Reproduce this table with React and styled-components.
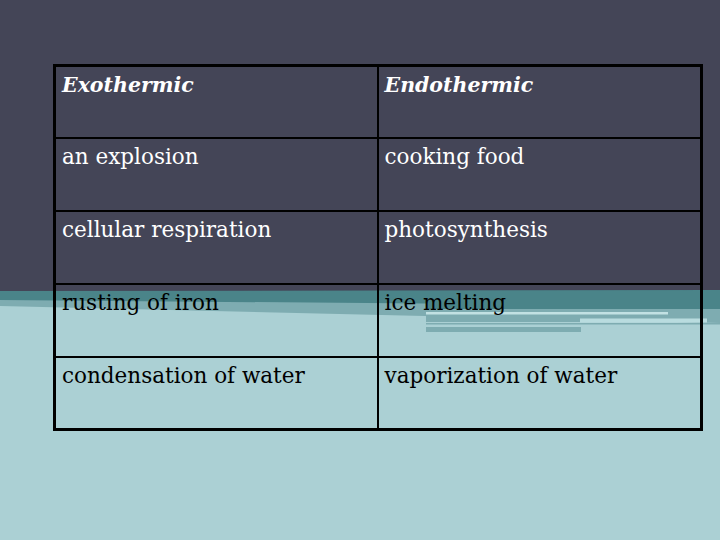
import styled, { createGlobalStyle } from "styled-components";

const GlobalStyle = createGlobalStyle`
    html, body {
        margin: 0;
        padding: 0;
        background: #abd0d4;
    }
`;

const Slide = styled.div`
    position: relative;
    width: 720px;
    height: 540px;
    overflow: hidden;
    background: linear-gradient(to bottom, #444557 0, #444557 291px, #abd0d4 291px);
    box-sizing: border-box;
    padding: 64px 0 0 53px;
    font-family: "DejaVu Serif", "Liberation Serif", serif;
`;

const Decor = styled.svg`
    position: absolute;
    left: 0;
    top: 0;
    width: 720px;
    height: 540px;
`;

const Table = styled.table`
    position: relative;
    width: 650px;
    border-collapse: collapse;
    border: 3px solid #000;
    table-layout: fixed;
`;

const Cell = styled.td`
    height: 72.8px;
    box-sizing: border-box;
    border: 2px solid #000;
    padding: 6px 6px 0;
    vertical-align: top;
    font-size: ${(p) => (p.$head ? "20.5px" : "21.5px")};
    line-height: 24px;
    white-space: nowrap;
    color: ${(p) => (p.$dark ? "#000" : "#fff")};
    font-weight: ${(p) => (p.$head ? 700 : 400)};
    font-style: ${(p) => (p.$head ? "italic" : "normal")};
    width: ${(p) => p.$w || "auto"};
`;

const rows = [
    ["an explosion", "cooking food"],
    ["cellular respiration", "photosynthesis"],
    ["rusting of iron", "ice melting"],
    ["condensation of water", "vaporization of water"],
];

const Bands = () => (
    <Decor viewBox="0 0 720 540">
        <polygon points="0,306 720,322 720,540 0,540" fill="#abd0d4" />
        <polygon points="0,299 720,305 720,323 0,306" fill="#7eacb1" />
        <polygon points="0,291 720,290 720,306 0,300" fill="#4a8489" />
        <rect x="426" y="300" width="294" height="9" fill="#4a8489" />
        <rect x="426" y="312" width="242" height="2.5" fill="#c2e1e3" />
        <rect x="426" y="315" width="154" height="7" fill="#7eacb1" />
        <rect x="580" y="318.5" width="127" height="4" fill="#b9dcdf" />
        <rect x="426" y="323" width="294" height="1.5" fill="#7eacb1" />
        <rect x="426" y="327" width="155" height="5" fill="#7eacb1" />
    </Decor>
);

export default function App() {
    return (
        <>
            <GlobalStyle />
            <Slide>
                <Bands />
                <Table>
                    <tbody>
                        <tr>
                            <Cell $head $w="323px">Exothermic</Cell>
                            <Cell $head>Endothermic</Cell>
                        </tr>
                        {rows.map((r, i) => (
                            <tr key={r[0]}>
                                <Cell $dark={i >= 2}>{r[0]}</Cell>
                                <Cell $dark={i >= 2}>{r[1]}</Cell>
                            </tr>
                        ))}
                    </tbody>
                </Table>
            </Slide>
        </>
    );
}
